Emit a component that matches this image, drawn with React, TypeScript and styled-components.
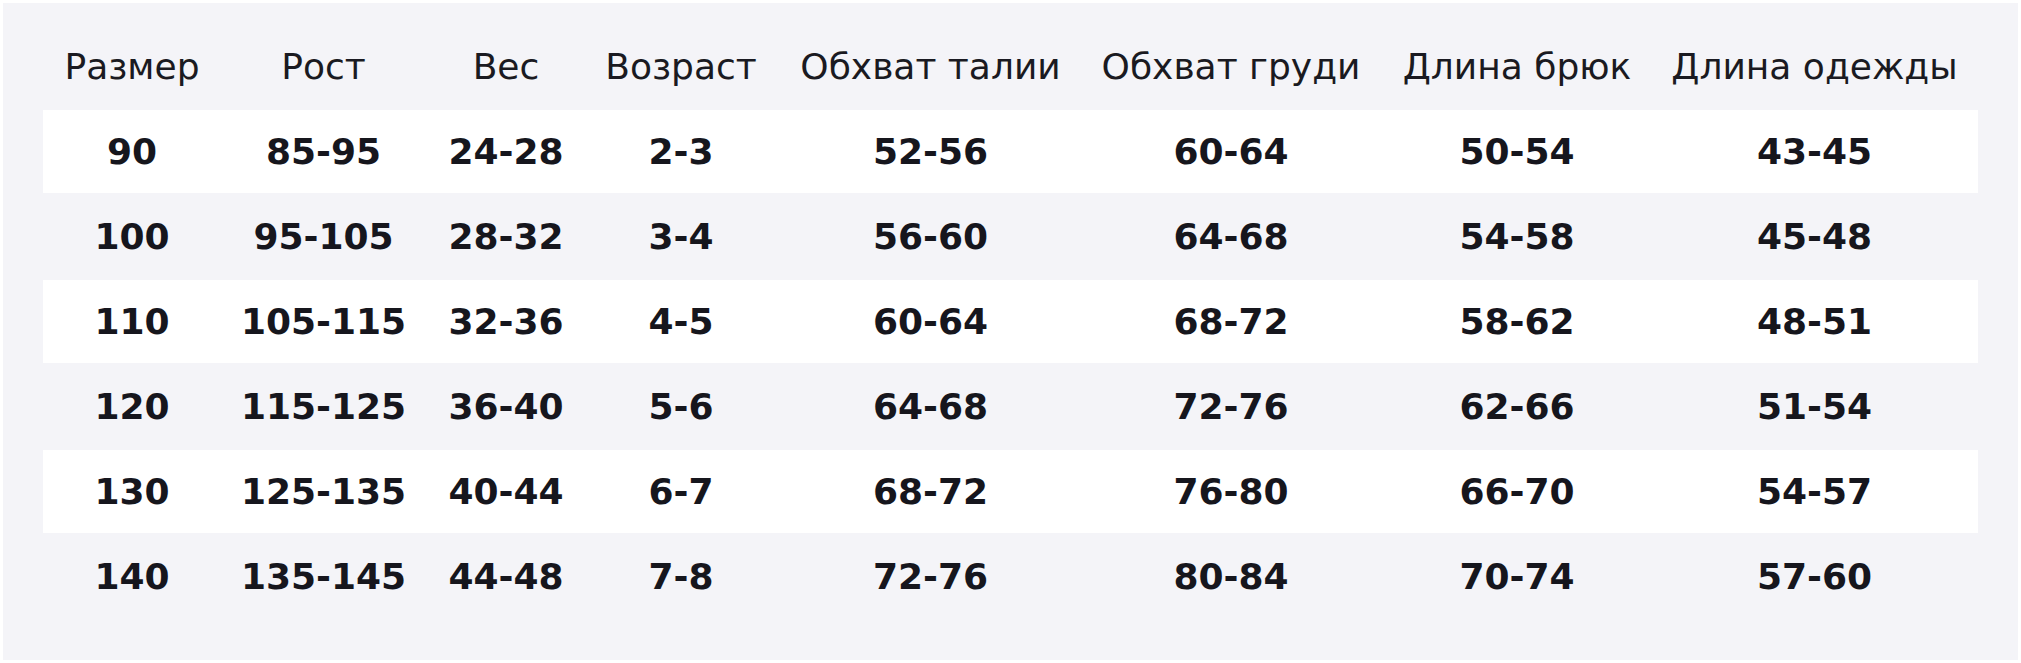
import * as React from 'react';
import styled, { createGlobalStyle } from 'styled-components';

const headers = [
  'Размер',
  'Рост',
  'Вес',
  'Возраст',
  'Обхват талии',
  'Обхват груди',
  'Длина брюк',
  'Длина одежды'
];

const rows = [
  ['90', '85-95', '24-28', '2-3', '52-56', '60-64', '50-54', '43-45'],
  ['100', '95-105', '28-32', '3-4', '56-60', '64-68', '54-58', '45-48'],
  ['110', '105-115', '32-36', '4-5', '60-64', '68-72', '58-62', '48-51'],
  ['120', '115-125', '36-40', '5-6', '64-68', '72-76', '62-66', '51-54'],
  ['130', '125-135', '40-44', '6-7', '68-72', '76-80', '66-70', '54-57'],
  ['140', '135-145', '44-48', '7-8', '72-76', '80-84', '70-74', '57-60']
];

const GlobalStyle = createGlobalStyle`
  html, body {
    margin: 0;
    padding: 0;
    background: #ffffff;
    overflow: hidden;
  }
  body {
    font-family: "DejaVu Sans", "Noto Sans", sans-serif;
    color: #16161d;
  }
`;

const Page = styled.div`
  padding: 3px;
`;

const Panel = styled.div`
  background: #f4f4f8;
  padding: 22px 40px 42px;
  display: flex;
  flex-direction: column;
  gap: 2px;
`;

const Row = styled.div<{ $striped?: boolean }>`
  display: grid;
  grid-template-columns: 178px 205px 160px 190px 309px 292px 280px 315px;
  height: 83px;
  align-items: center;
  background: ${props => (props.$striped ? '#ffffff' : 'transparent')};
`;

const Cell = styled.div<{ $head?: boolean }>`
  text-align: center;
  white-space: nowrap;
  font-size: 36px;
  font-weight: ${props => (props.$head ? 400 : 700)};
  color: ${props => (props.$head ? '#1a1a21' : '#16161d')};
`;

const App: React.FC = () => (
  <Page>
    <GlobalStyle />
    <Panel>
      <Row>
        {headers.map(h => (
          <Cell key={h} $head>
            {h}
          </Cell>
        ))}
      </Row>
      {rows.map((row, i) => (
        <Row key={row[0]} $striped={i % 2 === 0}>
          {row.map((value, j) => (
            <Cell key={j}>{value}</Cell>
          ))}
        </Row>
      ))}
    </Panel>
  </Page>
);

export default App;
